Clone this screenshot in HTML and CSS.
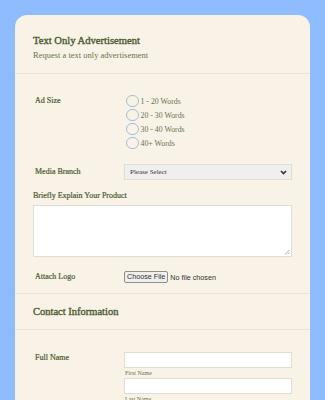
FILE: index.html
```html
<!DOCTYPE html>
<html>
<head>
<meta charset="utf-8">
<link rel="stylesheet" href="styles.css">
</head>
<body>
<div class="card">
  <div class="section header">
    <h1 class="title">Text Only Advertisement</h1>
    <p class="subtitle">Request a text only advertisement</p>
  </div>
  <div class="section fields">
    <div class="row adsize">
      <div class="label">Ad Size</div>
      <div class="control radios">
        <label class="radio"><span class="circle"></span>1 - 20 Words</label>
        <label class="radio"><span class="circle"></span>20 - 30 Words</label>
        <label class="radio"><span class="circle"></span>30 - 40 Words</label>
        <label class="radio"><span class="circle"></span>40+ Words</label>
      </div>
    </div>
    <div class="row media">
      <div class="label">Media Branch</div>
      <div class="control">
        <div class="select"><span>Please Select</span>
          <svg class="chev" width="7" height="5" viewBox="0 0 7 5"><path d="M1 1 L3.5 3.6 L6 1" fill="none" stroke="#333" stroke-width="1.6"/></svg>
        </div>
      </div>
    </div>
    <div class="block explain">
      <div class="label">Briefly Explain Your Product</div>
      <div class="textarea"><svg class="grip" width="6" height="6" viewBox="0 0 6 6"><path d="M5.5 1 L1 5.5 M5.5 3.5 L3.5 5.5" stroke="#999" stroke-width="0.8"/></svg></div>
    </div>
    <div class="row logo">
      <div class="label">Attach Logo</div>
      <div class="control file"><span class="filebtn">Choose File</span><span class="nofile">No file chosen</span></div>
    </div>
  </div>
  <div class="section contact">
    <h2 class="title2">Contact Information</h2>
  </div>
  <div class="section fields2">
    <div class="row name">
      <div class="label">Full Name</div>
      <div class="control">
        <div class="input"></div>
        <div class="sub">First Name</div>
        <div class="input"></div>
        <div class="sub">Last Name</div>
      </div>
    </div>
  </div>
</div>
</body>
</html>
```
FILE: styles.css
```css
html, body { margin: 0; padding: 0; }
* { box-sizing: border-box; }
body {
  background: #8ebcff;
  font-family: "Liberation Serif", serif;
  color: #4b5a2f;
  height: 400px;
  overflow: hidden;
}
.card {
  margin: 15px 15px 0;
  background: #f8f2e7;
  border-radius: 12px 12px 0 0;
  height: 385px;
  overflow: hidden;
}
.section { border-bottom: 1px solid #ece4d6; }
.header { padding: 19px 18px 12px; }
.title { margin: 0; font-size: 10.6px; font-weight: normal; line-height: 14px; color: #4b5a2f; -webkit-text-stroke: 0.35px #4b5a2f; }
.subtitle { margin: 1px 0 0; font-size: 8.5px; line-height: 12px; color: #6c7350; }
.fields { padding: 20px 18px 10px; }
.row { display: flex; }
.label { width: 91px; flex: none; font-size: 8px; line-height: 12px; padding-left: 2px; color: #4b5a2f; -webkit-text-stroke: 0.2px #4b5a2f; }
.control { flex: 1; }
.adsize .label { padding-top: 1px; }
.radios { display: flex; flex-direction: column; padding-left: 2px; }
.radio { display: flex; align-items: center; gap: 2px; font-size: 7.8px; height: 14px; color: #6c7350; }
.circle { width: 12.5px; height: 12.5px; border: 1.3px solid #a3c0d6; border-radius: 50%; flex: none; }
.media { margin-top: 14px; align-items: center; }
.select { height: 16px; border: 1px solid #e2ddd3; background: #efefef; display: flex; align-items: center; justify-content: space-between; padding: 0 4px 0 5px; font-size: 7px; color: #333; }
.chev { display: block; }
.explain { margin-top: 10px; }
.explain .label { width: auto; padding-left: 0; }
.textarea { margin-top: 3px; height: 52px; background: #fff; border: 1px solid #e2ddd3; position: relative; }
.grip { position: absolute; right: 1px; bottom: 1px; }
.logo { margin-top: 14px; align-items: center; height: 12px; }
.file { display: flex; align-items: center; gap: 2px; font-family: "Liberation Sans", sans-serif; font-size: 7.2px; color: #333; }
.filebtn { border: 1px solid #8f8f8f; background: #efefef; border-radius: 2px; padding: 0 2px; line-height: 10px; height: 12px; }
.contact { padding: 11px 18px 10px; }
.title2 { margin: 0; font-size: 10.5px; font-weight: normal; line-height: 14px; color: #4b5a2f; -webkit-text-stroke: 0.35px #4b5a2f; }
.fields2 { padding: 22px 18px 0; border-bottom: none; }
.input { height: 16px; background: #fff; border: 1px solid #e2ddd3; }
.sub { font-size: 6px; color: #6c7350; margin: 1px 0 1px 1px; line-height: 8px; }
```
